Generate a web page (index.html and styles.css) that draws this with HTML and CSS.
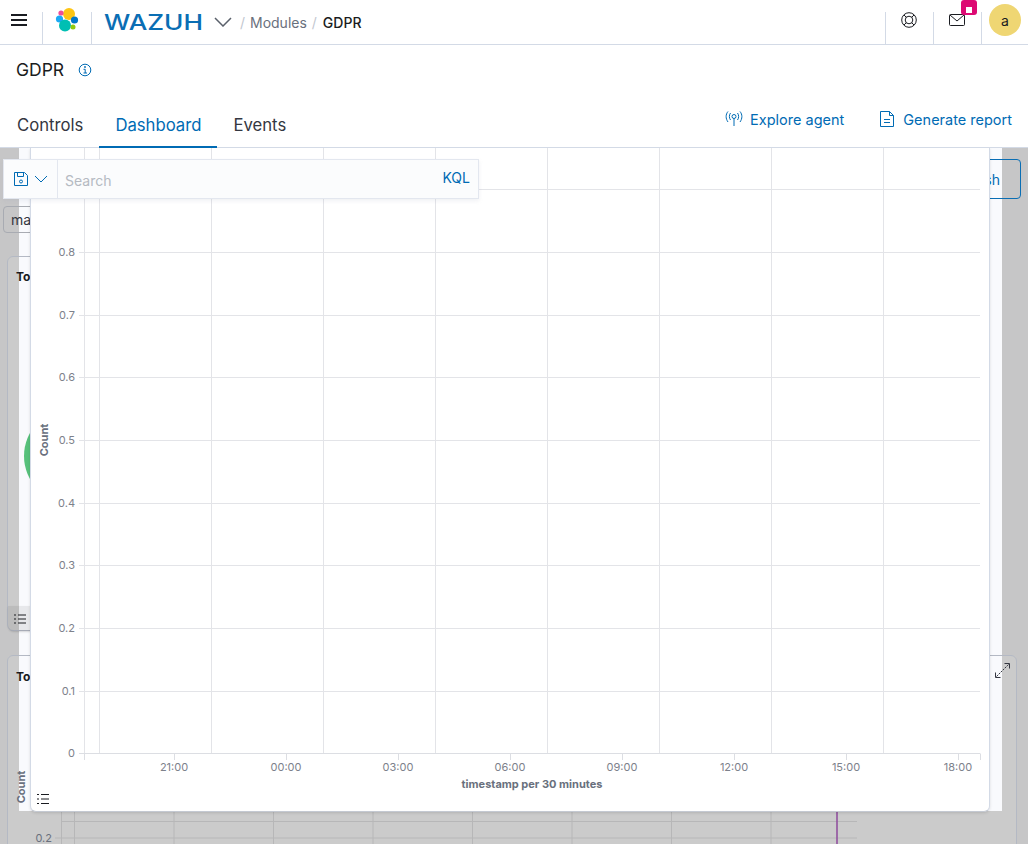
FILE: index.html
```html
<!DOCTYPE html>
<html lang="en">
<head>
<meta charset="utf-8">
<title>GDPR</title>
<link rel="stylesheet" href="styles.css">
</head>
<body>
<header class="topbar">
  <div class="nav-cell cell-menu">
    <svg width="16" height="12" viewBox="0 0 16 12"><path class="ink-2" d="M0 1h16M0 6h16M0 11h16"/></svg>
  </div>
  <div class="nav-cell cell-logo">
    <svg width="26" height="26" viewBox="0 0 26 26">
      <circle cx="15" cy="7" r="6" fill="#fec514"/>
      <circle cx="7" cy="6" r="2.6" fill="#f04e98"/>
      <circle cx="5.500" cy="12" r="3.600" fill="#1ba9f5"/>
      <circle cx="20.500" cy="13" r="3.600" fill="#0077cc"/>
      <circle cx="11" cy="18.500" r="6" fill="#00bfb3"/>
      <circle cx="19" cy="20" r="2.500" fill="#93c90e"/>
    </svg>
  </div>
  <div class="brand">
    <svg class="wordmark" width="100" height="30" viewBox="0 0 100 30"><text x="0" y="23" textLength="99" lengthAdjust="spacingAndGlyphs">WAZUH</text></svg>
    <svg class="brand-chevron" width="18" height="10" viewBox="0 0 18 10"><path d="M1 1l8 8 8-8"/></svg>
  </div>
  <nav class="crumbs">
    <span class="crumb-sep">/</span><span class="crumb">Modules</span><span class="crumb-sep">/</span><span class="crumb-current">GDPR</span>
  </nav>
  <div class="nav-cell cell-help">
    <svg width="16" height="16" viewBox="0 0 16 16"><g class="ink-1"><circle cx="8" cy="8" r="7.300"/><circle cx="8" cy="8" r="3.800"/><path d="M3 3l2.300 2.300M13 3l-2.300 2.300M3 13l2.300-2.300M13 13l-2.300-2.300"/></g></svg>
  </div>
  <div class="nav-cell cell-mail">
    <svg width="16" height="12" viewBox="0 0 16 12"><g class="ink-1"><rect x=".5" y=".5" width="15" height="11" rx="1"/><path d="M1 1l7 6 7-6"/></g></svg>
    <span class="badge"></span>
  </div>
  <div class="nav-cell cell-user"><span class="avatar">a</span></div>
</header>

<section class="page-title">
  <h1>GDPR</h1>
  <svg width="14" height="14" viewBox="0 0 14 14"><g class="blue-line"><circle cx="7" cy="7" r="5.800"/><path d="M5.500 6.300H7.200V10M5.500 10H9"/></g><circle cx="7" cy="4" r=".9" fill="#006bb4"/></svg>
</section>

<div class="tabbar">
  <a class="tab">Controls</a>
  <a class="tab tab-active">Dashboard</a>
  <a class="tab">Events</a>
  <div class="actions">
    <a class="action action-agent">
      <svg width="18" height="16" viewBox="0 0 18 16"><g class="blue-line"><circle cx="9" cy="5.500" r="2"/><path d="M9 7.500V15M5.500 9C4 7 4 4 5.500 2M12.500 2C14 4 14 7 12.500 9M3 11C.5 7.500.5 3.500 3 .5M15 .5C17.500 3.500 17.500 7.500 15 11"/></g></svg>
      Explore agent
    </a>
    <a class="action action-report">
      <svg width="14" height="16" viewBox="0 0 14 16"><path class="blue-line" d="M.5.5H9.500L13.500 4.500V15.500H.5ZM9.500.5V4.500H13.500M4 8.500H10M4 11.500H10"/></svg>
      Generate report
    </a>
  </div>
</div>

<main class="stage">
  <div class="strip"></div>

  <div class="underlay">
    <div class="refresh-row"><button class="refresh">Refresh</button></div>
    <div class="chip-row"><span class="chip">manager.name: wazuh</span></div>

    <article class="card card-top">
      <h2 class="card-title">Top</h2>
      <div class="pie"></div>
      <button class="legend-toggle">
        <svg width="12" height="10" viewBox="0 0 12 10"><path class="ink-1" d="M0 1h2M4 1h8M0 5h2M4 5h8M0 9h2M4 9h8"/></svg>
      </button>
    </article>

    <article class="card card-bottom">
      <h2 class="card-title">Top</h2>
      <svg class="expand" width="15" height="15" viewBox="0 0 15 15"><path class="ink-thin" d="M9.500 .5H14.500V5.500M.5 9.500V14.500H5.500"/><path class="ink-dash" d="M1.500 13.500L13.500 1.500"/></svg>
      <svg class="dim-chart" width="1010" height="190" viewBox="7 655 1010 190">
        <text class="dim-count" transform="translate(25 787) rotate(-90)" text-anchor="middle">Count</text>
        <text class="dim-tick" x="52" y="842" text-anchor="end">0.2</text>
        <g class="dim-grid">
          <path d="M61.500 811.500V844M74.500 811.500V844M174 811.500V844M273.500 811.500V844M373 811.500V844M472.500 811.500V844M572 811.500V844M671.500 811.500V844M771 811.500V844"/>
          <path d="M61 821.500H857M55 838H857"/>
        </g>
        <path class="dim-mark" d="M837 811V844"/>
      </svg>
    </article>
  </div>

  <div class="searchbar">
    <div class="search-menu">
      <svg width="14" height="14" viewBox="0 0 14 14"><g class="blue-line"><path d="M.5.5H10.500L13.500 3.500V13.500H.5Z"/><path d="M3.500.5V4.500H9.500V.5"/><circle cx="7" cy="9.500" r="1.500"/></g></svg>
      <svg width="14" height="8" viewBox="0 0 14 8"><path class="blue-line" d="M1 1l6 6 6-6"/></svg>
    </div>
    <span class="search-input">Search</span>
    <span class="kql">KQL</span>
  </div>

  <div class="modal">
    <svg class="chart" width="959" height="663" viewBox="30 148 959 663">
      <g class="grid">
        <path d="M84.500 148V754M99.500 148V754M211.500 148V754M323.500 148V754M435.500 148V754M547.500 148V754M659.500 148V754M771.500 148V754M883.500 148V754"/>
        <path d="M79 189.500H980M79 252.500H980M79 315.500H980M79 377.500H980M79 440.500H980M79 503.500H980M79 565.500H980M79 628.500H980M79 691.500H980"/>
      </g>
      <g class="axis">
        <path d="M79 753.500H980.500"/>
        <path d="M84.500 754V760M174.500 754V760M286.500 754V760M398.500 754V760M510.500 754V760M622.500 754V760M734.500 754V760M846.500 754V760M958.500 754V760M980.500 754V760"/>
      </g>
      <g class="ticks-y" text-anchor="end">
        <text x="75" y="256">0.8</text>
        <text x="75" y="319">0.7</text>
        <text x="75" y="381">0.6</text>
        <text x="75" y="444">0.5</text>
        <text x="75" y="507">0.4</text>
        <text x="75" y="569">0.3</text>
        <text x="75" y="632">0.2</text>
        <text x="75" y="695">0.1</text>
        <text x="75" y="757">0</text>
      </g>
      <g class="ticks-x" text-anchor="middle">
        <text x="174" y="771">21:00</text>
        <text x="286" y="771">00:00</text>
        <text x="398" y="771">03:00</text>
        <text x="510" y="771">06:00</text>
        <text x="622" y="771">09:00</text>
        <text x="734" y="771">12:00</text>
        <text x="846" y="771">15:00</text>
        <text x="958" y="771">18:00</text>
      </g>
      <text class="axis-title" transform="translate(48 440) rotate(-90)" text-anchor="middle">Count</text>
      <text class="axis-title" x="532" y="788" text-anchor="middle">timestamp per 30 minutes</text>
      <path class="ink-1" d="M37 794.500h2M41 794.500h8M37 799h2M41 799h8M37 803.500h2M41 803.500h8"/>
    </svg>
  </div>
</main>
</body>
</html>
```

FILE: styles.css
```css
* { box-sizing: border-box; }

html, body {
  margin: 0;
  height: 100%;
  overflow: hidden;
}

body {
  font-family: "Inter", "Liberation Sans", sans-serif;
  font-size: 14px;
  color: #343741;
  background: #fff;
}

.ink-1 { fill: none; stroke: #1a1c21; stroke-width: 1; }
.ink-2 { fill: none; stroke: #1a1c21; stroke-width: 2; }
.ink-thin { fill: none; stroke: #343741; stroke-width: 1; }
.ink-dash { fill: none; stroke: #343741; stroke-width: 1; stroke-dasharray: 2 1; }
.blue-line { fill: none; stroke: #006bb4; stroke-width: 1; }

/* top bar */
.topbar {
  display: flex;
  height: 45px;
  border-bottom: 1px solid #d3dae6;
}

.nav-cell {
  position: relative;
  display: flex;
  align-items: center;
  justify-content: center;
  align-self: flex-end;
  height: 32px;
  padding-bottom: 16px;
  width: 48px;
}

.cell-menu { width: 43px; justify-content: flex-start; padding-left: 11px; border-right: 1px solid #d3dae6; }
.cell-logo { width: 49px; border-right: 1px solid #d3dae6; }
.cell-logo svg { margin-top: -1px; }
.cell-help { width: 48px; margin-left: auto; padding-right: 2px; border-left: 1px solid #d3dae6; }
.cell-mail { width: 48px; padding-right: 2px; border-left: 1px solid #d3dae6; }
.cell-user { width: 47px; border-left: 1px solid #d3dae6; }

.brand {
  display: flex;
  align-items: center;
  gap: 10px;
  margin-left: 12px;
  height: 44px;
}

.brand-chevron { margin-top: -1px; }

.wordmark text {
  font-family: "Inter", sans-serif;
  font-size: 22px;
  font-weight: 500;
  fill: #0a6eb4;
}

.brand-chevron path { fill: none; stroke: #5a606b; stroke-width: 1.5; }

.crumbs {
  display: flex;
  align-items: center;
  height: 44px;
  margin-left: 3px;
}

.crumb { color: #69707d; }
.crumb-sep { color: #c2c7d0; margin: 0 5px; width: 5px; }
.crumb-current { color: #1a1c21; font-weight: 500; margin-left: 1px; }

.badge {
  position: absolute;
  top: -12px;
  left: 27px;
  width: 16px;
  height: 15px;
  border-radius: 3px;
  background: #dd0a73;
}

.badge::after {
  content: "";
  position: absolute;
  top: 7px;
  left: 5px;
  width: 6px;
  height: 6px;
  background: #fff;
}

.avatar {
  position: absolute;
  top: -8px;
  left: 7px;
  display: flex;
  align-items: center;
  justify-content: center;
  width: 32px;
  height: 32px;
  border-radius: 50%;
  background: #efd673;
  color: #1a1c21;
  font-size: 14px;
}

/* title */
.page-title {
  display: flex;
  align-items: center;
  gap: 14px;
  height: 50px;
  padding-left: 16px;
}

.page-title h1 {
  margin: 0 0 2px;
  font-size: 17.500px;
  font-weight: 400;
  color: #1a1c21;
}

/* tabs */
.tabbar {
  display: flex;
  align-items: flex-end;
  height: 53px;
  padding-left: 1px;
  border-bottom: 1px solid #d3dae6;
}

.tab {
  display: flex;
  align-items: center;
  height: 48px;
  padding: 1px 16px 0;
  margin-bottom: -1px;
  font-size: 16.700px;
  color: #343741;
}

.tab-active {
  color: #006bb4;
  border-bottom: 2px solid #006bb4;
  padding-top: 3px;
}

.actions {
  display: flex;
  align-items: center;
  gap: 36px;
  margin-left: auto;
  padding-right: 16px;
  height: 48px;
  align-self: flex-start;
}

.action {
  display: flex;
  align-items: center;
  font-size: 14.500px;
  color: #006bb4;
}

.action-agent { gap: 7px; }
.action-report { gap: 9px; }

/* dimmed stage */
.stage {
  position: relative;
  height: 696px;
  overflow: hidden;
  background: #c6c6c7;
}

.strip {
  position: absolute;
  z-index: 1;
  top: 0;
  left: 19px;
  width: 983px;
  height: 663px;
  background: #f9fafd;
}

.underlay {
  padding: 11px 11px 0 7px;
}

.refresh-row {
  display: flex;
  justify-content: flex-end;
  margin-right: -4px;
}

.refresh {
  position: relative;
  z-index: 2;
  width: 120px;
  height: 40px;
  padding: 0 20px 0 0;
  text-align: right;
  border: 1px solid #0a6eb4;
  border-radius: 4px;
  background: transparent;
  color: #006bb4;
  font: 14px "Inter", sans-serif;
}

.chip-row {
  margin: 7px 0 0 -4px;
  height: 27px;
}

.chip {
  position: relative;
  z-index: 2;
  display: inline-flex;
  align-items: center;
  height: 27px;
  padding: 0 7px;
  border: 1px solid #a8abb2;
  border-radius: 4px;
  color: #343741;
  font-size: 14px;
}

.card {
  position: relative;
  border-radius: 6px;
  background: #cbcbcb;
}

.card::before {
  content: "";
  position: absolute;
  z-index: 2;
  inset: 0;
  border: 1px solid #b4b9c4;
  border-radius: 6px;
}

.card-top { width: 975px; height: 375px; margin-top: 23px; }
.card-bottom { height: 400px; margin-top: 24px; }

.card-title {
  position: relative;
  z-index: 2;
  margin: 0;
  padding: 14px 0 0 9px;
  font-size: 12px;
  line-height: 14px;
  font-weight: 700;
  color: #1a1c21;
}

.card-bottom .card-title { padding-top: 15px; }

.pie {
  position: absolute;
  z-index: 2;
  left: 17px;
  top: 153px;
  width: 94px;
  height: 94px;
  border-radius: 50%;
  background: #57c17b;
}

.legend-toggle {
  position: absolute;
  z-index: 2;
  left: 1px;
  bottom: 0;
  display: flex;
  align-items: center;
  width: 24px;
  height: 25px;
  padding: 0 0 0 6px;
  border: 0;
  border-radius: 0 0 0 6px;
  background: rgba(0, 0, 0, .07);
  box-shadow: 0 1px 2px rgba(0, 0, 0, .15);
}

.expand {
  position: absolute;
  z-index: 2;
  top: 8px;
  left: 988px;
}

.dim-chart {
  position: absolute;
  z-index: 2;
  top: 0;
  left: 0;
}

.dim-count { font: 700 11px "Inter", sans-serif; fill: #69707d; }
.dim-tick { font: 11px "Inter", sans-serif; fill: #69707d; }
.dim-grid path { fill: none; stroke: #b7b7b8; stroke-width: 1; }
.dim-mark { fill: none; stroke: #8e4a9c; stroke-width: 1.5; }

/* search */
.searchbar {
  position: absolute;
  z-index: 4;
  top: 11px;
  left: 3px;
  display: flex;
  align-items: center;
  width: 476px;
  height: 40px;
  border: 1px solid #e3e7ef;
  background: #fbfcfd;
  box-shadow: 0 2px 4px rgba(152, 162, 179, .15);
}

.search-menu {
  display: flex;
  align-items: center;
  gap: 6px;
  width: 54px;
  height: 100%;
  padding-left: 10px;
  border-right: 1px solid #e3e7ef;
}

.search-input {
  margin-left: 7px;
  padding-top: 2px;
  color: #b5bac2;
}

.kql {
  margin-left: auto;
  padding: 0 8px 3px 0;
  color: #006bb4;
}

/* modal */
.modal {
  position: absolute;
  z-index: 3;
  top: 0;
  left: 30px;
  width: 960px;
  height: 664px;
  background: #fff;
  border-left: 1px solid #d3dae6;
  border-right: 1px solid #d3dae6;
  border-bottom: 1px solid #c4c9d2;
  border-radius: 0 0 6px 6px;
  box-shadow: 0 1px 3px rgba(0, 0, 0, .12);
}

.chart {
  display: block;
  margin-left: -1px;
}

.grid path { fill: none; stroke: #e3e4e8; stroke-width: 1; }
.axis path { fill: none; stroke: #dcdee3; stroke-width: 1; }
.ticks-y text, .ticks-x text { font-size: 11px; fill: #7d818b; }
.axis-title { font-size: 11px; font-weight: 700; fill: #69707d; }
```
